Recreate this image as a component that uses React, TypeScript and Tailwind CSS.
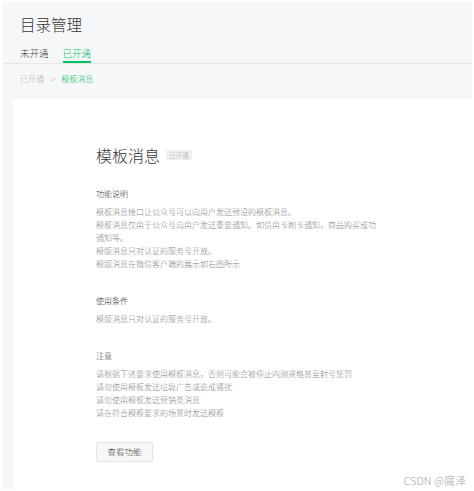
import React from "react";

const font = { fontFamily: '"Noto Sans CJK SC", "Noto Sans", sans-serif' };

function Section({ title, lines, className = "" }: { title: string; lines: string[]; className?: string }) {
  return (
    <div className={className}>
      <div className="text-[8px] leading-[13px] text-[#333] font-light">{title}</div>
      <div className="mt-[5px] text-[8px] leading-[13px] text-[#858585] font-light">
        {lines.map((l, i) => (
          <div key={i}>{l}</div>
        ))}
      </div>
    </div>
  );
}

export default function App() {
  return (
    <div className="relative w-[474px] h-[491px] bg-white overflow-hidden" style={font}>
      <div className="ml-[3px] mt-[2px] w-[469px] h-[487px] bg-[#f6f7f9] flex flex-col">
        <div className="pl-[17px] pt-[12px] text-[15.5px] leading-[20px] text-[#353535] font-light">目录管理</div>
        <div className="mt-[11px] flex border-b border-[#e6e7e9] pl-[17px]">
          <div className="h-[18px] text-[9.5px] leading-[16px] text-[#444] font-light">未开通</div>
          <div className="ml-[14px] h-[18px] border-b-2 border-[#07c160] text-[9.5px] leading-[16px] text-[#07c160] font-light">已开通</div>
        </div>
        <div className="mt-[9px] flex items-center pl-[17px] text-[8px] leading-[12px] font-light">
          <span className="text-[#a8a8a8]">已开通</span>
          <span className="ml-[7px] text-[#b0b0b0]">&gt;</span>
          <span className="ml-[6px] text-[#07c160]">模板消息</span>
        </div>
        <div className="mt-[14px] ml-[10px] mr-[-6px] flex-1 bg-white pl-[83px]">
          <div className="pt-[46px] flex items-center">
            <span className="text-[16px] leading-[20px] text-[#353535] font-light">模板消息</span>
            <span className="ml-[6px] bg-[#f0f0f0] px-[3px] text-[6.5px] leading-[10px] text-[#a8a8a8] font-light">已开通</span>
          </div>
          <div className="w-[281px]">
            <Section
              className="mt-[21.5px]"
              title="功能说明"
              lines={[
                "模板消息接口让公众号可以向用户发送预设的模板消息。",
                "模板消息仅用于公众号向用户发送重要通知。如信用卡刷卡通知，商品购买成功通知等。",
                "模版消息只对认证的服务号开放。",
                "模版消息在微信客户端的展示如右图所示",
              ]}
            />
            <Section className="mt-[24px]" title="使用条件" lines={["模版消息只对认证的服务号开放。"]} />
            <Section
              className="mt-[24px]"
              title="注意"
              lines={[
                "请根据下述要求使用模板消息，否则可能会被停止内测资格甚至封号惩罚",
                "请勿使用模板发送垃圾广告或造成骚扰",
                "请勿使用模板发送营销类消息",
                "请在符合模板要求的场景时发送模板",
              ]}
            />
          </div>
          <div className="mt-[23px] inline-flex h-[20px] w-[57px] items-center justify-center rounded-[2px] border border-[#e4e5e7] bg-[#f6f7f8] text-[8.5px] text-[#353535] font-light">
            查看功能
          </div>
        </div>
      </div>
      <div className="absolute right-[8px] bottom-[4px] text-[11px] leading-[14px] text-[#a8a8a8] font-light">CSDN @腐泽</div>
    </div>
  );
}
